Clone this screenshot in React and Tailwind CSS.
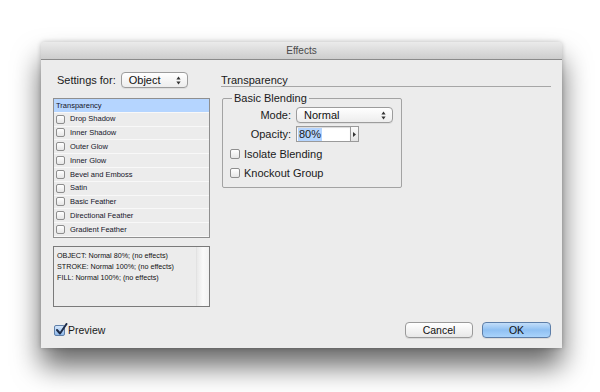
import React from 'react';

const effects = [
    'Drop Shadow',
    'Inner Shadow',
    'Outer Glow',
    'Inner Glow',
    'Bevel and Emboss',
    'Satin',
    'Basic Feather',
    'Directional Feather',
    'Gradient Feather',
];

function UpDown() {
    return (
        <svg width="5" height="9" viewBox="0 0 5 9" className="shrink-0">
            <path d="M2.5 0.5 L4.6 3.4 L0.4 3.4 Z" fill="#333" />
            <path d="M2.5 8.5 L4.6 5.6 L0.4 5.6 Z" fill="#333" />
        </svg>
    );
}

function Popup({ label, className = '' }) {
    return (
        <div className={`h-[16px] flex items-center justify-between pl-[7px] pr-[6px] rounded-[4px] border border-[#9c9c9c] bg-gradient-to-b from-[#ffffff] to-[#ededed] shadow-[0_1px_0_rgba(0,0,0,0.06)] ${className}`}>
            <span className="text-[11px] leading-none text-[#111]">{label}</span>
            <UpDown />
        </div>
    );
}

function Box({ size = 'w-[9px] h-[9px]' }) {
    return (
        <div className={`${size} shrink-0 rounded-[2px] border border-[#8e8e8e] bg-gradient-to-b from-[#ffffff] to-[#e6e6e6]`} />
    );
}

export default function App() {
    return (
        <div className="w-[600px] h-[392px] bg-white overflow-hidden pt-[42px] pl-[41px] font-['Liberation_Sans',Arial,sans-serif] text-[#1a1a1a]">
            <div className="w-[521px] h-[306px] flex flex-col bg-[#ececec] rounded-t-[4px] shadow-[0_18px_28px_rgba(0,0,0,0.6),0_0_5px_rgba(0,0,0,0.22)]">
                {/* title bar */}
                <div className="h-[18px] shrink-0 flex items-center justify-center rounded-t-[4px] border-b border-[#8a8a8a] bg-gradient-to-b from-[#ebebeb] to-[#cdcdcd]">
                    <span className="text-[10px] leading-none text-[#4a4a4a]">Effects</span>
                </div>

                <div className="flex-1 flex flex-col pt-[12px] pb-[10px] pl-[12px] pr-[11px]">
                    <div className="flex">
                        {/* left column */}
                        <div className="w-[157px] shrink-0 flex flex-col">
                            <div className="h-[16px] flex items-center">
                                <span className="ml-[4px] text-[11px] leading-none">Settings for:</span>
                                <Popup label="Object" className="ml-[5px] w-[67px]" />
                            </div>

                            <div className="mt-[10px] h-[140px] border border-[#8f8f8f] bg-[#f4f4f4] flex flex-col">
                                <div className="h-[13.8px] flex items-center pl-[2px] bg-[#b5d5ff] border-b border-[#f8f8f8]">
                                    <span className="text-[7.5px] leading-none text-[#15152a]">Transparency</span>
                                </div>
                                {effects.map((e) => (
                                    <div key={e} className="h-[13.8px] flex items-center pl-[2px] bg-[#ececec] border-b border-[#f8f8f8]">
                                        <Box />
                                        <span className="ml-[5px] text-[7.5px] leading-none text-[#15152a]">{e}</span>
                                    </div>
                                ))}
                            </div>

                            <div className="mt-[8px] h-[61px] border border-[#7a7a7a] bg-[#ececec] flex">
                                <div className="flex-1 pt-[3px] pl-[3px] text-[7.2px] leading-[11px] text-[#111]">
                                    <div>OBJECT: Normal 80%; (no effects)</div>
                                    <div>STROKE: Normal 100%; (no effects)</div>
                                    <div>FILL: Normal 100%; (no effects)</div>
                                </div>
                                <div className="w-[13px] bg-gradient-to-r from-[#e9e9e9] via-[#fafafa] to-[#f2f2f2] border-l border-[#e2e2e2]" />
                            </div>
                        </div>

                        {/* right column */}
                        <div className="flex-1 ml-[11px] flex flex-col">
                            <div className="h-[15px] flex items-start border-b border-[#a6a6a6]">
                                <span className="mt-[3px] text-[11px] leading-none">Transparency</span>
                            </div>

                            <div className="relative ml-[1px] mt-[11px] w-[180px] h-[90px] border border-[#a3a3a3] rounded-[2px]">
                                <span className="absolute left-[9px] -top-[6px] px-[2px] bg-[#ececec] text-[11px] leading-none">Basic Blending</span>

                                <div className="mt-[8px] flex items-center">
                                    <span className="w-[68px] text-right text-[11px] leading-none">Mode:</span>
                                    <Popup label="Normal" className="ml-[5px] w-[97px]" />
                                </div>

                                <div className="mt-[3px] flex items-center">
                                    <span className="w-[68px] text-right text-[11px] leading-none">Opacity:</span>
                                    <div className="ml-[5px] h-[16px] w-[54px] flex items-center bg-white border border-[#9a9a9a] border-r-0 shadow-[inset_0_1px_1px_rgba(0,0,0,0.15)]">
                                        <span className="ml-[1px] bg-[#b5d5ff] text-[11px] leading-[13px] px-[1px]">80%</span>
                                    </div>
                                    <div className="h-[16px] w-[9px] flex items-center justify-center border border-[#9a9a9a] bg-gradient-to-b from-[#fbfbfb] to-[#e4e4e4]">
                                        <svg width="3" height="5" viewBox="0 0 3 5">
                                            <path d="M0 0 L3 2.5 L0 5 Z" fill="#333" />
                                        </svg>
                                    </div>
                                </div>

                                <div className="mt-[5px] ml-[7px] h-[14px] flex items-center">
                                    <Box size="w-[10px] h-[10px]" />
                                    <span className="ml-[4px] text-[11px] leading-none">Isolate Blending</span>
                                </div>
                                <div className="mt-[5px] ml-[7px] h-[14px] flex items-center">
                                    <Box size="w-[10px] h-[10px]" />
                                    <span className="ml-[4px] text-[11px] leading-none">Knockout Group</span>
                                </div>
                            </div>
                        </div>
                    </div>

                    <div className="flex-1" />

                    {/* bottom row */}
                    <div className="h-[16px] flex items-center">
                        <div className="ml-[1px] w-[11px] h-[11px] relative rounded-[2px] border border-[#5f7fa8] bg-gradient-to-b from-[#d4e6fb] to-[#8fb9ea]">
                            <svg width="13" height="13" viewBox="0 0 13 13" className="absolute -top-[3px] left-0">
                                <path d="M2 7 L5 10.5 L11.5 1" stroke="#1d2c4a" strokeWidth="2" fill="none" strokeLinecap="round" strokeLinejoin="round" />
                            </svg>
                        </div>
                        <span className="ml-[3px] text-[10.5px] leading-none">Preview</span>

                        <div className="flex-1" />

                        <button className="w-[68px] h-[16px] rounded-[4px] border border-[#9a9a9a] bg-gradient-to-b from-[#ffffff] to-[#e8e8e8] text-[10.5px] leading-none text-[#111] shadow-[0_1px_0_rgba(0,0,0,0.08)]">
                            Cancel
                        </button>
                        <button className="ml-[9px] w-[69px] h-[16px] rounded-[4px] border border-[#5d7ea8] bg-gradient-to-b from-[#c3def9] via-[#8fc0f2] to-[#a9d3fb] text-[10.5px] leading-none text-[#111] shadow-[0_1px_0_rgba(0,0,0,0.08)]">
                            OK
                        </button>
                    </div>
                </div>
            </div>
        </div>
    );
}
